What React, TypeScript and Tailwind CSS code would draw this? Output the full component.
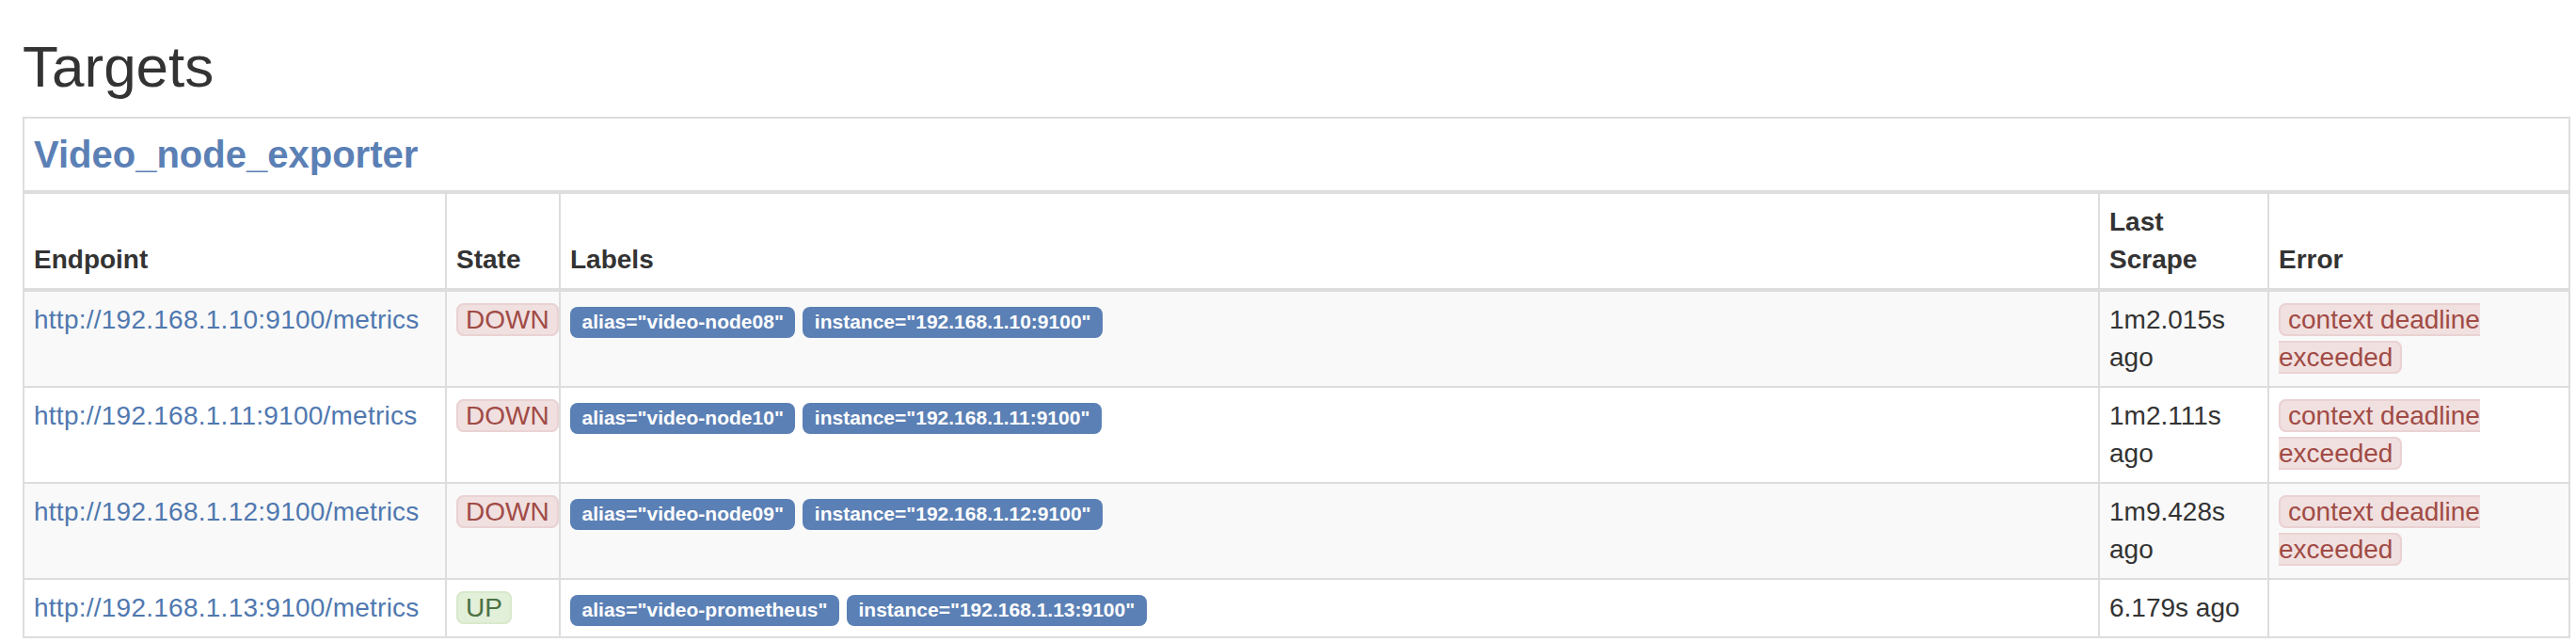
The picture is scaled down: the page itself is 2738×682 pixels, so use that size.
const targets = [
  {
    url: 'http://192.168.1.10:9100/metrics',
    up: false,
    alias: 'video-node08',
    instance: '192.168.1.10:9100',
    scrape: '1m2.015s ago',
    error: 'context deadline exceeded',
  },
  {
    url: 'http://192.168.1.11:9100/metrics',
    up: false,
    alias: 'video-node10',
    instance: '192.168.1.11:9100',
    scrape: '1m2.111s ago',
    error: 'context deadline exceeded',
  },
  {
    url: 'http://192.168.1.12:9100/metrics',
    up: false,
    alias: 'video-node09',
    instance: '192.168.1.12:9100',
    scrape: '1m9.428s ago',
    error: 'context deadline exceeded',
  },
  {
    url: 'http://192.168.1.13:9100/metrics',
    up: true,
    alias: 'video-prometheus',
    instance: '192.168.1.13:9100',
    scrape: '6.179s ago',
    error: '',
  },
];

const Label = ({ children }: { children: string }) => (
  <span className="rounded-[8px] bg-[#5b80b5] px-[12.6px] pt-[4.2px] pb-[6.3px] text-[21px] leading-none font-bold text-white">
    {children}
  </span>
);

const StateBadge = ({ up }: { up: boolean }) =>
  up ? (
    <span className="rounded-[8px] border-2 border-[#d9e9cd] bg-[#e2efd9] px-2 text-[#4b7043]">UP</span>
  ) : (
    <span className="rounded-[8px] border-2 border-[#ead2d3] bg-[#f1e0e0] px-2 text-[#a04b45]">DOWN</span>
  );

export default function App() {
  return (
    <div className="min-h-screen bg-white pl-6 font-['Liberation_Sans','Helvetica_Neue',Arial,sans-serif] text-[28px] leading-[40px] text-[#333]">
      <h2 className="pt-[38px] pb-5 text-[62px] leading-[66px] font-medium">Targets</h2>
      <table className="w-[2708px] table-fixed border-2 border-[#ddd]">
        <colgroup>
          <col className="w-[449px]" />
          <col className="w-[121px]" />
          <col className="w-[1636px]" />
          <col className="w-[180px]" />
          <col className="w-[320px]" />
        </colgroup>
        <thead>
          <tr>
            <th colSpan={5} className="border-2 border-b-4 border-[#ddd] p-[10px] text-left align-bottom">
              <a href="#job-Video_node_exporter" className="text-[40px] leading-[56px] font-bold text-[#5b80b5]">
                Video_node_exporter
              </a>
            </th>
          </tr>
          <tr className="font-bold">
            <th className="border-2 border-b-4 border-[#ddd] p-[10px] text-left align-bottom">Endpoint</th>
            <th className="border-2 border-b-4 border-[#ddd] p-[10px] text-left align-bottom">State</th>
            <th className="border-2 border-b-4 border-[#ddd] p-[10px] text-left align-bottom">Labels</th>
            <th className="border-2 border-b-4 border-[#ddd] p-[10px] text-left align-bottom">
              Last
              <br />
              Scrape
            </th>
            <th className="border-2 border-b-4 border-[#ddd] p-[10px] text-left align-bottom">Error</th>
          </tr>
        </thead>
        <tbody>
          {targets.map((t, i) => (
            <tr key={t.url} className={i % 2 === 0 ? 'bg-[#f9f9f9]' : 'bg-white'}>
              <td className="border-2 border-[#ddd] p-[10px] align-top">
                <a href={t.url} className="tracking-[0.25px] text-[#5078af]">
                  {t.url}
                </a>
              </td>
              <td className="border-2 border-[#ddd] p-[10px] align-top">
                <StateBadge up={t.up} />
              </td>
              <td className="border-2 border-[#ddd] p-[10px] align-top">
                <Label>{`alias="${t.alias}"`}</Label> <Label>{`instance="${t.instance}"`}</Label>
              </td>
              <td className="border-2 border-[#ddd] p-[10px] align-top">{t.scrape}</td>
              <td className="border-2 border-[#ddd] p-[10px] align-top">
                {t.error && (
                  <span className="rounded-[8px] border-2 border-[#ead2d3] bg-[#f1e0e0] px-2 text-[#a04b45]">
                    {t.error}
                  </span>
                )}
              </td>
            </tr>
          ))}
        </tbody>
      </table>
    </div>
  );
}
